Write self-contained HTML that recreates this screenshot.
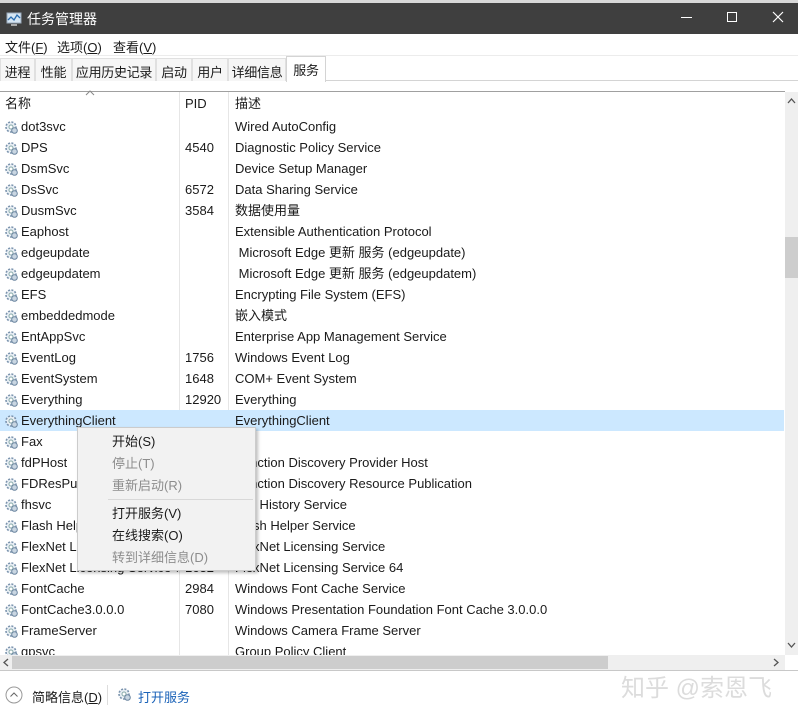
<!DOCTYPE html>
<html><head><meta charset="utf-8">
<style>
*{margin:0;padding:0;box-sizing:border-box}
body{width:798px;height:717px;overflow:hidden;background:#fff;font-family:"Liberation Sans","Noto Sans CJK SC",sans-serif;font-size:13px;color:#1a1a1a;position:relative}
.abs{position:absolute}
#title{left:0;top:0;width:798px;height:34px;background:#3f3f3f;border-top:3px solid #d8d8d8;color:#fff}
#menu{top:34px;left:0;width:798px;height:22px;border-bottom:1px solid #ececec}
#menu span{position:absolute;top:3px}
#tabs{top:56px;left:0;width:798px;height:25px;border-bottom:1px solid #d4d4d4}
.tab{position:absolute;top:2px;height:23px;border:1px solid #e0e0e0;border-bottom:none;background:#f6f6f6;padding-top:3px;text-align:center;white-space:nowrap;overflow:hidden;letter-spacing:-0.3px}
.row{position:absolute;left:0;width:784px;height:21px;line-height:21px;white-space:nowrap}
.row span{position:absolute}
.n{left:21px}.p{left:185px}.d{left:235px}
.g{position:absolute;left:4px;top:4px;width:14px;height:14px}
.sel{background:#cce8ff}
#cm{left:77px;top:427px;width:179px;height:144px;background:#f2f2f2;border:1px solid #ccc;box-shadow:2px 2px 3px rgba(0,0,0,.25)}
#cm div{position:absolute;left:34px}
.dis{color:#8d8d8d}
</style></head><body>
<div id="title" class="abs">
<svg class="abs" style="left:6px;top:8px" width="16" height="16" viewBox="0 0 16 16"><rect x="1" y="2" width="14" height="10" fill="#d6e6f4" stroke="#9ab"/><polyline points="2,9 5,6 8,9 11,4 14,7" fill="none" stroke="#2a6db0" stroke-width="1.3"/><rect x="5" y="13" width="6" height="2" fill="#aaa"/></svg>
<span class="abs" style="left:27px;top:6px;font-size:14px">任务管理器</span>
<div class="abs" style="left:681px;top:14px;width:11px;height:1px;background:#fff"></div>
<div class="abs" style="left:727px;top:9px;width:10px;height:10px;border:1px solid #fff"></div>
<svg class="abs" style="left:772px;top:8px" width="12" height="12"><path d="M1 1L11 11M11 1L1 11" stroke="#fff" stroke-width="1.2"/></svg>
</div>
<div id="menu" class="abs"><span style="left:5px">文件(<u>F</u>)</span><span style="left:57px">选项(<u>O</u>)</span><span style="left:113px">查看(<u>V</u>)</span></div>
<div id="tabs" class="abs">
<div class="tab" style="left:0;width:35px">进程</div>
<div class="tab" style="left:35px;width:37px">性能</div>
<div class="tab" style="left:72px;width:84px">应用历史记录</div>
<div class="tab" style="left:156px;width:36px">启动</div>
<div class="tab" style="left:192px;width:36px">用户</div>
<div class="tab" style="left:228px;width:58px">详细信息</div>
<div class="tab" style="left:286px;top:0;height:26px;width:40px;background:#fff;border-color:#d4d4d4">服务</div>
</div>
<div class="abs" style="left:0;top:91px;width:785px;height:1px;background:#a0a0a0"></div>
<svg class="abs" style="left:85px;top:90px" width="10" height="6"><path d="M1 5L5 1L9 5" fill="none" stroke="#888"/></svg>
<div class="abs" style="left:179px;top:92px;width:1px;height:563px;background:#e6e6e6"></div>
<div class="abs" style="left:228px;top:92px;width:1px;height:563px;background:#e6e6e6"></div>
<div class="row" style="top:92px;height:23px;line-height:23px"><span style="left:5px">名称</span><span class="p">PID</span><span class="d">描述</span></div>
<div id="rows"></div>
<div id="cm" class="abs">
<div style="top:3px">开始(S)</div>
<div class="dis" style="top:25px">停止(T)</div>
<div class="dis" style="top:47px">重新启动(R)</div>
<div style="left:30px;top:71px;width:145px;height:1px;background:#d8d8d8"></div>
<div style="top:75px">打开服务(V)</div>
<div style="top:97px">在线搜索(O)</div>
<div class="dis" style="top:119px">转到详细信息(D)</div>
</div>
<div class="abs" style="left:785px;top:92px;width:13px;height:563px;background:#efefef"></div>
<svg class="abs" style="left:787px;top:98px" width="9" height="6"><path d="M1 5L4.5 1L8 5" fill="none" stroke="#555" stroke-width="1.3"/></svg>
<div class="abs" style="left:785px;top:237px;width:13px;height:41px;background:#cdcdcd"></div>
<svg class="abs" style="left:787px;top:642px" width="9" height="6"><path d="M1 1L4.5 5L8 1" fill="none" stroke="#555" stroke-width="1.3"/></svg>
<div class="abs" style="left:0;top:655px;width:785px;height:15px;background:#efefef"></div>
<div class="abs" style="left:12px;top:656px;width:596px;height:13px;background:#cdcdcd"></div>
<svg class="abs" style="left:3px;top:658px" width="6" height="9"><path d="M5 1L1 4.5L5 8" fill="none" stroke="#555" stroke-width="1.3"/></svg>
<svg class="abs" style="left:773px;top:658px" width="6" height="9"><path d="M1 1L5 4.5L1 8" fill="none" stroke="#555" stroke-width="1.3"/></svg>
<div class="abs" style="left:0;top:670px;width:798px;height:1px;background:#c8c8c8"></div>
<svg class="abs" style="left:5px;top:686px" width="18" height="18"><circle cx="9" cy="9" r="8" fill="none" stroke="#999"/><path d="M5.5 10.5L9 7L12.5 10.5" fill="none" stroke="#666"/></svg>
<span class="abs" style="left:32px;top:687px">简略信息(<u>D</u>)</span>
<div class="abs" style="left:107px;top:685px;width:1px;height:20px;background:#ddd"></div>
<svg class="abs g" style="left:117px;top:687px"><use href="#gear"/></svg>
<span class="abs" style="left:138px;top:687px;color:#1a62b8">打开服务</span>
<span class="abs" style="left:621px;top:668px;font-size:24px;color:#dcdcdc">知乎 @索恩飞</span>
<svg width="0" height="0" style="position:absolute"><defs><g id="gear"><circle cx="7" cy="7" r="5" fill="#e8eef4" stroke="#7a93ad" stroke-width="1.6" stroke-dasharray="2 1.4"/><circle cx="7" cy="7" r="2" fill="#fff" stroke="#8aa"/><circle cx="10.5" cy="10.5" r="2.8" fill="#c9d6e2" stroke="#6c86a0"/></g></defs></svg>
<script>
var d=[["dot3svc","","Wired AutoConfig"],["DPS","4540","Diagnostic Policy Service"],["DsmSvc","","Device Setup Manager"],["DsSvc","6572","Data Sharing Service"],["DusmSvc","3584","数据使用量"],["Eaphost","","Extensible Authentication Protocol"],["edgeupdate",""," Microsoft Edge 更新 服务 (edgeupdate)"],["edgeupdatem",""," Microsoft Edge 更新 服务 (edgeupdatem)"],["EFS","","Encrypting File System (EFS)"],["embeddedmode","","嵌入模式"],["EntAppSvc","","Enterprise App Management Service"],["EventLog","1756","Windows Event Log"],["EventSystem","1648","COM+ Event System"],["Everything","12920","Everything"],["EverythingClient","","EverythingClient"],["Fax","",""],["fdPHost","","Function Discovery Provider Host"],["FDResPub","","Function Discovery Resource Publication"],["fhsvc","","File History Service"],["Flash Helper Service","","Flash Helper Service"],["FlexNet Licensing Service","","FlexNet Licensing Service"],["FlexNet Licensing Service 64","1632","FlexNet Licensing Service 64"],["FontCache","2984","Windows Font Cache Service"],["FontCache3.0.0.0","7080","Windows Presentation Foundation Font Cache 3.0.0.0"],["FrameServer","","Windows Camera Frame Server"],["gpsvc","","Group Policy Client"]];
var h="";d.forEach(function(r,i){var t=116+21*i;if(t>650)return;var hh=Math.min(21,655-t);
h+='<div class="row'+(i==14?' sel':'')+'" style="top:'+t+'px;height:'+hh+'px;overflow:hidden"><svg class="g"><use href="#gear"/></svg><span class="n" style="max-width:157px;overflow:hidden">'+r[0]+'</span><span class="p">'+r[1]+'</span><span class="d">'+r[2].replace(/^ /,'&nbsp;')+'</span></div>';});
document.getElementById("rows").innerHTML=h;
</script>
</body></html>
